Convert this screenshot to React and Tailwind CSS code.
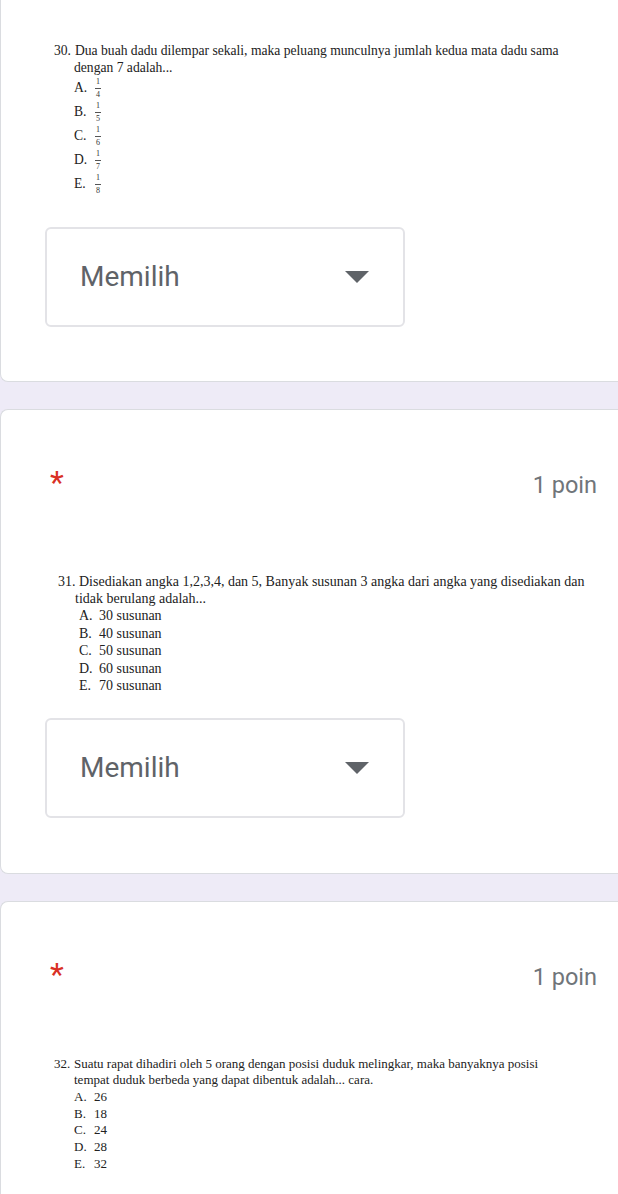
import React from 'react';

const serif = { fontFamily: '"Liberation Serif", "Times New Roman", serif' };
const roboto = { fontFamily: 'Roboto, "Noto Sans", sans-serif' };

const Frac = ({ d }) => (
  <span className="inline-flex flex-col items-center leading-none text-[8px] text-[#333]">
    <span>1</span>
    <span className="w-[6px] h-px bg-[#555] my-[2px]"></span>
    <span>{d}</span>
  </span>
);

const Dropdown = () => (
  <div className="ml-[44px] w-[360px] h-[100px] rounded-md border-2 border-[#e3e3e7] bg-white flex items-center justify-between pl-[33px] pr-[34px]">
    <span className="text-[28px] text-[#5f6368]" style={roboto}>Memilih</span>
    <svg width="24" height="12" viewBox="0 0 24 12">
      <path d="M0 0 L24 0 L12 12 Z" fill="#5f6368" />
    </svg>
  </div>
);

const PointHeader = () => (
  <div className="flex items-start justify-between pl-[49px] pr-[43px] h-[30px]">
    <span className="text-[#d93025] text-[32px] leading-none -mt-[3px]" style={roboto}>*</span>
    <span className="text-[#70757a] text-[23.5px] leading-none mt-[5px]" style={roboto}>1 poin</span>
  </div>
);

// one question block: first line with number, wrapped line, then options
const Question = ({ num, first, second, options, font, lead, row, numX, textX, wrapX, optX, labelW }) => (
  <div className="text-[#222]" style={{ ...serif, fontSize: font }}>
    <div style={{ lineHeight: lead }}>
      <div className="flex" style={{ paddingLeft: numX }}>
        <span className="shrink-0" style={{ width: textX - numX }}>{num}</span>
        <span className="whitespace-nowrap">{first}</span>
      </div>
      <div className="whitespace-nowrap" style={{ paddingLeft: wrapX }}>{second}</div>
    </div>
    <div className="flex flex-col" style={{ paddingLeft: optX }}>
      {options.map(([label, content]) => (
        <div key={label} className="flex items-center" style={{ height: row }}>
          <span className="shrink-0" style={{ width: labelW }}>{label}</span>
          {content}
        </div>
      ))}
    </div>
  </div>
);

export default function App() {
  const q30opts = [['A.', '4'], ['B.', '5'], ['C.', '6'], ['D.', '7'], ['E.', '8']].map(([l, d]) => [l, <Frac d={d} />]);
  const q31opts = [['A.', '30 susunan'], ['B.', '40 susunan'], ['C.', '50 susunan'], ['D.', '60 susunan'], ['E.', '70 susunan']];
  const q32opts = [['A.', '26'], ['B.', '18'], ['C.', '24'], ['D.', '28'], ['E.', '32']];

  return (
    <div className="min-h-screen bg-[#eeebf7] overflow-hidden">
      {/* Card 30 */}
      <div className="w-[640px] bg-white border-l border-b border-[#dadce0] rounded-bl-lg pt-[42px] pb-[54px]">
        <Question
          num="30."
          first="Dua buah dadu dilempar sekali, maka peluang munculnya jumlah kedua mata dadu sama"
          second="dengan 7 adalah..."
          options={q30opts}
          font="13.6px"
          lead="17px"
          row="24px"
          numX={53}
          textX={74}
          wrapX={73}
          optX={73}
          labelW={21}
        />
        <div className="mt-[31px]">
          <Dropdown />
        </div>
      </div>

      <div className="h-[27px]"></div>

      {/* Card 31 */}
      <div className="w-[640px] bg-white border-l border-y border-[#dadce0] rounded-l-lg pt-[59px] pb-[55px]">
        <PointHeader />
        <div className="mt-[74px]">
          <Question
            num="31."
            first="Disediakan angka 1,2,3,4, dan 5, Banyak susunan 3 angka dari angka yang disediakan dan"
            second="tidak berulang adalah..."
            options={q31opts}
            font="14px"
            lead="17px"
            row="17.5px"
            numX={57}
            textX={78}
            wrapX={74}
            optX={78}
            labelW={20}
          />
        </div>
        <div className="mt-[23px]">
          <Dropdown />
        </div>
      </div>

      <div className="h-[27px]"></div>

      {/* Card 32 */}
      <div className="w-[640px] bg-white border-l border-t border-[#dadce0] rounded-tl-lg pt-[59px] pb-[40px]">
        <PointHeader />
        <div className="mt-[65px]">
          <Question
            num="32."
            first="Suatu rapat dihadiri oleh 5 orang dengan posisi duduk melingkar, maka banyaknya posisi"
            second="tempat duduk berbeda yang dapat dibentuk adalah... cara."
            options={q32opts}
            font="13px"
            lead="16.5px"
            row="16.7px"
            numX={53}
            textX={73}
            wrapX={73}
            optX={73}
            labelW={20}
          />
        </div>
      </div>
    </div>
  );
}
